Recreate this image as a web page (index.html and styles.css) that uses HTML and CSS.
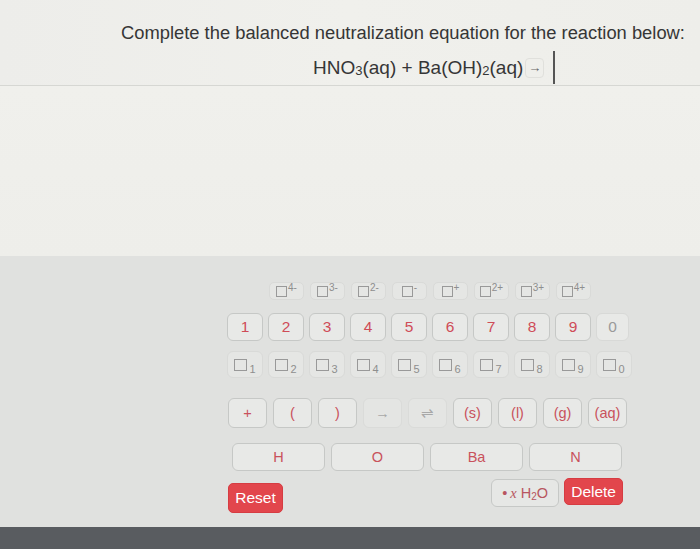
FILE: index.html
```html
<!DOCTYPE html>
<html>
<head>
<meta charset="utf-8">
<link rel="stylesheet" href="styles.css">
</head>
<body>
<div class="screen">
  <div class="question">
    <p class="prompt">Complete the balanced neutralization equation for the reaction below:</p>
    <div class="equation">HNO<sub>3</sub>(aq) + Ba(OH)<sub>2</sub>(aq)<span class="arrow-box">→</span><span class="cursor"></span></div>
  </div>
  <div class="blank"></div>
  <div class="panel">
    <div class="keypad">
      <div class="row charges">
        <span class="key faint"><i class="box"></i><sup>4-</sup></span>
        <span class="key faint"><i class="box"></i><sup>3-</sup></span>
        <span class="key faint"><i class="box"></i><sup>2-</sup></span>
        <span class="key faint"><i class="box"></i><sup>-</sup></span>
        <span class="key faint"><i class="box"></i><sup>+</sup></span>
        <span class="key faint"><i class="box"></i><sup>2+</sup></span>
        <span class="key faint"><i class="box"></i><sup>3+</sup></span>
        <span class="key faint"><i class="box"></i><sup>4+</sup></span>
      </div>
      <div class="row numbers">
        <span class="key">1</span>
        <span class="key">2</span>
        <span class="key">3</span>
        <span class="key">4</span>
        <span class="key">5</span>
        <span class="key">6</span>
        <span class="key">7</span>
        <span class="key">8</span>
        <span class="key">9</span>
        <span class="key dim">0</span>
      </div>
      <div class="row subs">
        <span class="key faint"><i class="box"></i><sub>1</sub></span>
        <span class="key faint"><i class="box"></i><sub>2</sub></span>
        <span class="key faint"><i class="box"></i><sub>3</sub></span>
        <span class="key faint"><i class="box"></i><sub>4</sub></span>
        <span class="key faint"><i class="box"></i><sub>5</sub></span>
        <span class="key faint"><i class="box"></i><sub>6</sub></span>
        <span class="key faint"><i class="box"></i><sub>7</sub></span>
        <span class="key faint"><i class="box"></i><sub>8</sub></span>
        <span class="key faint"><i class="box"></i><sub>9</sub></span>
        <span class="key faint"><i class="box"></i><sub>0</sub></span>
      </div>
      <div class="row symbols">
        <span class="key">+</span>
        <span class="key">(</span>
        <span class="key">)</span>
        <span class="key disabled">→</span>
        <span class="key disabled">⇌</span>
        <span class="key">(s)</span>
        <span class="key">(l)</span>
        <span class="key">(g)</span>
        <span class="key">(aq)</span>
      </div>
      <div class="row elements">
        <span class="key">H</span>
        <span class="key">O</span>
        <span class="key">Ba</span>
        <span class="key">N</span>
      </div>
      <div class="row actions">
        <span class="key red reset">Reset</span>
        <div class="right">
          <span class="key water">• <em>x</em> H<sub>2</sub>O</span>
          <span class="key red">Delete</span>
        </div>
      </div>
    </div>
  </div>
  <div class="bezel"></div>
</div>
</body>
</html>
```

FILE: styles.css
```css
html, body {
  margin: 0;
  padding: 0;
}
body {
  width: 700px;
  height: 549px;
  overflow: hidden;
  font-family: "Liberation Sans", Arial, sans-serif;
  background: #ecece8;
}
.screen {
  display: flex;
  flex-direction: column;
  height: 549px;
}
.question {
  height: 85px;
  border-bottom: 1px solid #d6d7d3;
  background: linear-gradient(90deg, #ededea 0%, #f0f0ec 50%, #eeeeea 100%);
}
.prompt {
  margin: 0;
  padding: 21px 0 0 121px;
  font-size: 18.35px;
  line-height: 24px;
  color: #363636;
  white-space: nowrap;
}
.equation {
  display: flex;
  align-items: center;
  margin: 6px 0 0 313px;
  font-size: 19px;
  line-height: 28px;
  color: #363636;
  white-space: pre;
}
.equation sub {
  font-size: 13px;
  line-height: 0;
  position: relative;
  top: 3px;
  vertical-align: baseline;
}
.arrow-box {
  display: inline-flex;
  align-items: center;
  justify-content: center;
  width: 17px;
  height: 18px;
  margin-left: 2px;
  border: 1px solid #e0e0dc;
  border-radius: 4px;
  font-size: 13px;
  color: #666;
}
.cursor {
  display: inline-block;
  width: 2px;
  height: 33px;
  margin-left: 9px;
  background: #555;
}
.blank {
  flex: 1;
  background: linear-gradient(180deg, #f0f0ec 0%, #eeeeea 100%);
}
.panel {
  height: 271px;
  background: #e0e1df;
}
.keypad {
  display: flex;
  flex-direction: column;
  align-items: flex-start;
  padding: 26px 0 0 227px;
}
.row {
  display: flex;
}
.key {
  box-sizing: border-box;
  display: inline-flex;
  align-items: center;
  justify-content: center;
  border: 1px solid #c6c8c6;
  border-radius: 6px;
  background: #e8e9e7;
  color: #cf4c57;
  font-size: 15.5px;
}
.key.faint {
  color: #8e8e8e;
  border-color: #d9dad8;
  background: #e5e6e4;
}
.key .box {
  display: inline-block;
  width: 9px;
  height: 9px;
  border: 1px solid #999;
}
.key sup {
  font-size: 10px;
  position: relative;
  top: -4px;
  vertical-align: baseline;
  margin-left: 1px;
}
.key sub {
  font-size: 11px;
  position: relative;
  top: 4px;
  vertical-align: baseline;
  margin-left: 2px;
}
.charges {
  margin-left: 42px;
  gap: 6px;
}
.charges .key {
  width: 35px;
  height: 18px;
  border-radius: 5px;
}
.numbers {
  margin-top: 13px;
  gap: 5px;
}
.numbers .key {
  width: 36px;
  height: 28px;
}
.numbers .key.dim {
  width: 33px;
  color: #9a9a9a;
  border-color: #d8d9d7;
}
.subs {
  margin-top: 10px;
  gap: 5px;
}
.subs .key {
  width: 36px;
  height: 27px;
}
.subs .box {
  width: 11px;
  height: 10px;
}
.symbols {
  margin-top: 20px;
  margin-left: 1px;
  gap: 6px;
}
.symbols .key {
  width: 39px;
  height: 30px;
  font-size: 14.5px;
  color: #c9525c;
}
.symbols .key.disabled {
  color: #a8a8a8;
  border-color: #dadbd9;
  background: #e4e5e3;
}
.elements {
  margin-top: 15px;
  margin-left: 5px;
  gap: 6px;
}
.elements .key {
  width: 93px;
  height: 28px;
  font-size: 14.5px;
  color: #c9525c;
}
.actions {
  margin-top: 7px;
  margin-left: 1px;
  width: 395px;
  justify-content: space-between;
  align-items: flex-start;
}
.actions .right {
  display: flex;
  gap: 5px;
}
.key.red {
  background: #e2464c;
  border-color: #d63c42;
  color: #ffffff;
  font-size: 15.5px;
  border-radius: 5px;
  height: 27px;
  padding: 0 6px;
}
.key.reset {
  margin-top: 5px;
  height: 30px;
  width: 55px;
  padding: 0;
}
.key.water {
  width: 68px;
  height: 28px;
  margin-top: 1px;
  font-size: 14.5px;
  color: #b85560;
  background: #e6e7e5;
}
.key.water em {
  font-family: "Liberation Serif", serif;
  font-style: italic;
  margin: 0 4px 0 3px;
}
.key.water sub {
  font-size: 10px;
  top: 3px;
  margin: 0;
}
.bezel {
  height: 22px;
  background: #595c60;
}
```
